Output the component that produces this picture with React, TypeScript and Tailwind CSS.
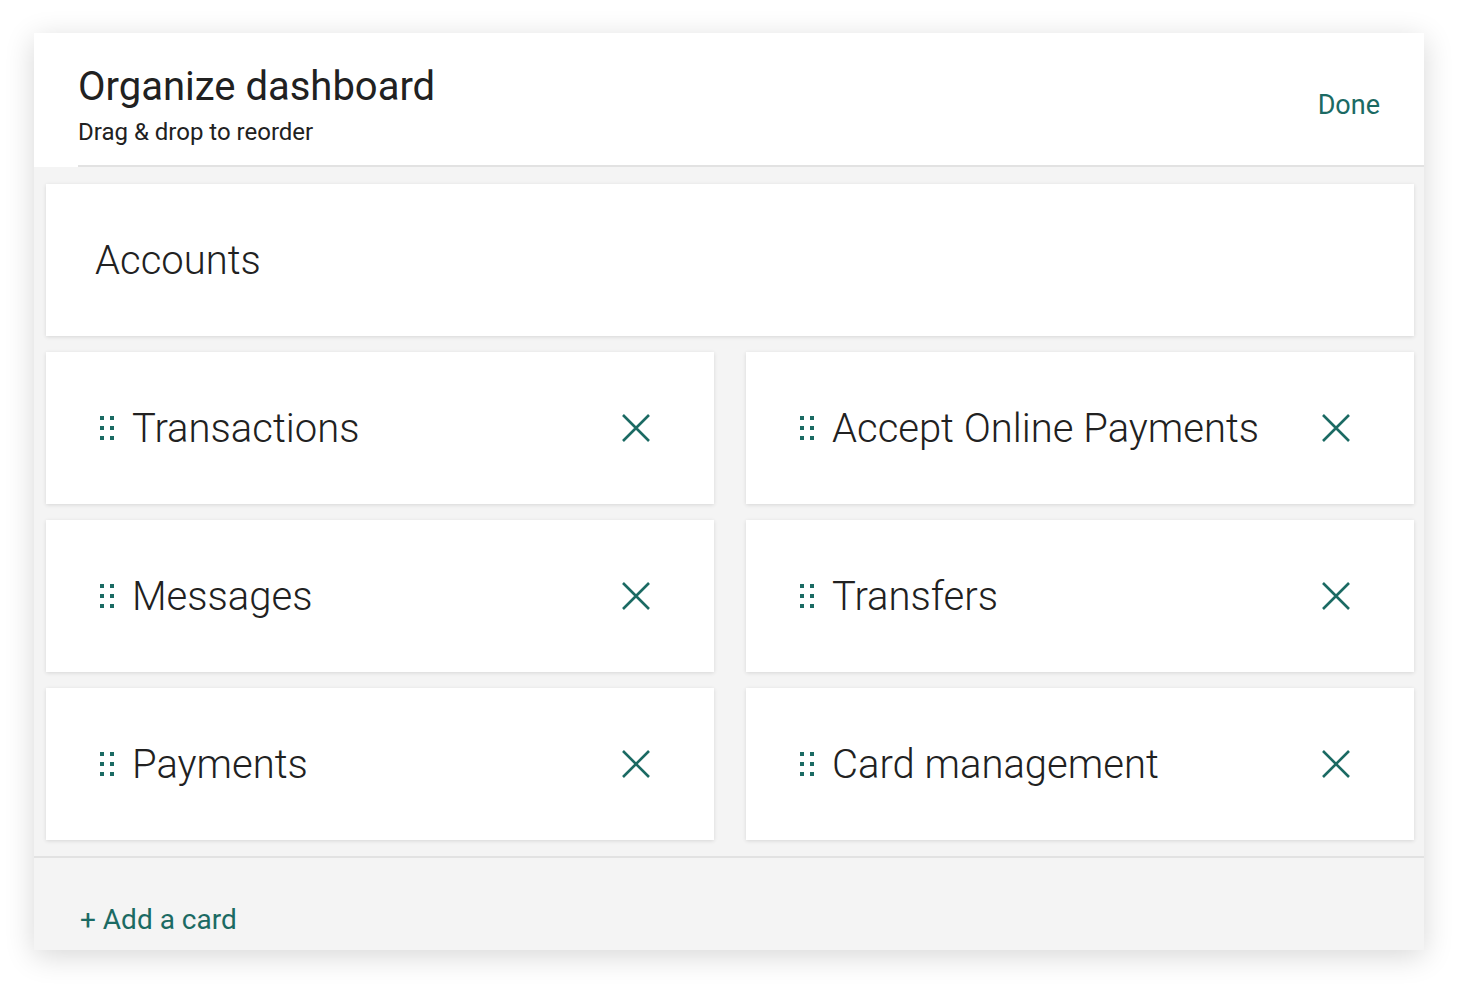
import React from "react";

const TEAL = "#1b6a63";

function Handle() {
  return (
    <svg width="14" height="24" viewBox="0 0 14 24" className="shrink-0">
      {[0, 10].map((x) =>
        [0, 10, 20].map((y) => (
          <rect key={`${x}-${y}`} x={x} y={y} width="4" height="4" fill={TEAL} />
        ))
      )}
    </svg>
  );
}

function XIcon() {
  return (
    <svg width="28" height="28" viewBox="0 0 28 28" className="shrink-0">
      <path d="M1 1 L27 27 M27 1 L1 27" stroke={TEAL} strokeWidth="2.6" fill="none" />
    </svg>
  );
}

function Card({ title }: { title: string }) {
  return (
    <div className="h-[152px] bg-white shadow-[0_1px_4px_rgba(0,0,0,0.12)] flex items-center pl-[54px] pr-[64px]">
      <Handle />
      <div className="ml-[18px] mt-[2px] flex-1 text-[40px] font-light text-[#212121] leading-none">{title}</div>
      <XIcon />
    </div>
  );
}

export default function App() {
  const cards = [
    "Transactions",
    "Accept Online Payments",
    "Messages",
    "Transfers",
    "Payments",
    "Card management",
  ];
  return (
    <div
      className="min-h-screen bg-white pt-[33px] pl-[34px]"
      style={{ fontFamily: "Roboto, 'Noto Sans', sans-serif" }}
    >
      <div className="w-[1390px] h-[917px] flex flex-col shadow-[0_6px_28px_rgba(0,0,0,0.16)] bg-[#f4f4f4]">
        <div className="bg-white h-[134px] pl-[44px] flex flex-col">
          <div className="flex-1 flex items-start pt-[32px] pr-[44px]">
            <div className="flex-1">
              <div className="text-[40px] leading-[44px] text-[#212121]">Organize dashboard</div>
              <div className="text-[24px] leading-[26px] mt-[10px] text-[#212121]">Drag &amp; drop to reorder</div>
            </div>
            <div className="text-[27px] leading-[32px] mt-[24px] text-[#1b6a63]">Done</div>
          </div>
          <div className="h-[2px] bg-[#e2e2e2]" />
        </div>
        <div className="pt-[17px] pb-[16px] pl-[12px] pr-[10px] flex flex-col gap-[16px]">
          <div className="h-[152px] bg-white shadow-[0_1px_4px_rgba(0,0,0,0.12)] flex items-center pl-[49px]">
            <div className="text-[40px] mt-[2px] font-light text-[#212121] leading-none">Accounts</div>
          </div>
          <div className="grid grid-cols-2 gap-x-[32px] gap-y-[16px]">
            {cards.map((c) => (
              <Card key={c} title={c} />
            ))}
          </div>
        </div>
        <div className="h-[2px] bg-[#e2e2e2]" />
        <div className="flex-1 flex items-end pl-[46px] pb-[14px]">
          <div className="text-[28px] leading-[32px] text-[#1b6a63]">+ Add a card</div>
        </div>
      </div>
    </div>
  );
}
